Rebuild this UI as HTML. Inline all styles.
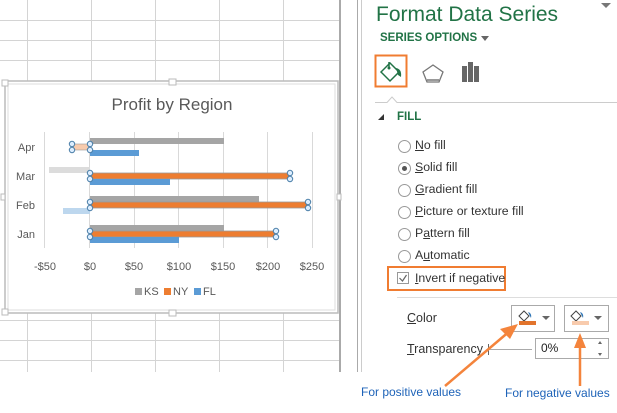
<!DOCTYPE html>
<html><head><meta charset="utf-8"><style>
body{margin:0;width:617px;height:413px;background:#fff;overflow:hidden;position:relative;font-family:"Liberation Sans",sans-serif}
.t{position:absolute;white-space:nowrap}
.r{position:absolute;left:398px;width:11px;height:11px;border:1px solid #999;border-radius:50%;background:#fff}
.l{position:absolute;left:415px;font-size:12.3px;color:#333}
</style></head><body>
<svg width="617" height="413" style="position:absolute;left:0;top:0" font-family="Liberation Sans, sans-serif">
<g stroke="#d4d4d4" stroke-width="1">
<line x1="0" y1="20.5" x2="340" y2="20.5"/><line x1="0" y1="40.5" x2="340" y2="40.5"/><line x1="0" y1="60.5" x2="340" y2="60.5"/>
<line x1="0" y1="320.5" x2="340" y2="320.5"/><line x1="0" y1="340.5" x2="340" y2="340.5"/><line x1="0" y1="360.5" x2="340" y2="360.5"/>
<line x1="27.5" y1="0" x2="27.5" y2="372"/><line x1="91.5" y1="0" x2="91.5" y2="372"/><line x1="155.5" y1="0" x2="155.5" y2="372"/><line x1="219.5" y1="0" x2="219.5" y2="372"/><line x1="283.5" y1="0" x2="283.5" y2="372"/>
</g>
<line x1="340" y1="0" x2="340" y2="372" stroke="#aaa" stroke-width="2"/>
<line x1="357.5" y1="0" x2="357.5" y2="372" stroke="#aaa"/>
<line x1="361.5" y1="0" x2="361.5" y2="372" stroke="#ccc"/>
<rect x="5" y="81" width="333" height="232" fill="#fff" stroke="#bbb" stroke-width="1.5"/>
<rect x="8" y="84" width="327" height="226" fill="#fff" stroke="#ddd"/>
<g fill="#fff" stroke="#bbb"><rect x="2" y="80" width="6" height="6"/><rect x="169" y="79" width="7" height="6"/><rect x="169" y="310" width="7" height="6"/><rect x="2" y="309" width="6" height="6"/><rect x="1" y="194" width="4" height="6"/><rect x="337" y="194" width="4" height="6"/></g>
<text x="172" y="110" font-size="17" fill="#595959" text-anchor="middle">Profit by Region</text>
<g stroke="#d9d9d9"><line x1="44.5" y1="132" x2="44.5" y2="248"/><line x1="89.5" y1="132" x2="89.5" y2="248"/><line x1="134.5" y1="132" x2="134.5" y2="248"/><line x1="178.5" y1="132" x2="178.5" y2="248"/><line x1="223.5" y1="132" x2="223.5" y2="248"/><line x1="267.5" y1="132" x2="267.5" y2="248"/><line x1="312.5" y1="132" x2="312.5" y2="248"/></g>
<g font-size="11" fill="#595959" text-anchor="end"><text x="35" y="151">Apr</text><text x="35" y="180">Mar</text><text x="35" y="209">Feb</text><text x="35" y="238">Jan</text></g>
<g font-size="11" fill="#595959" text-anchor="middle"><text x="45" y="270">-$50</text><text x="90" y="270">$0</text><text x="134" y="270">$50</text><text x="179" y="270">$100</text><text x="223" y="270">$150</text><text x="268" y="270">$200</text><text x="312" y="270">$250</text></g>
<rect x="90" y="138" width="134" height="6" fill="#a5a5a5"/>
<rect x="72" y="144" width="18" height="6" fill="#f8cbad" stroke="#999" stroke-width=".6"/>
<rect x="90" y="150" width="49" height="6" fill="#5b9bd5"/>
<rect x="49" y="167" width="41" height="6" fill="#dcdcdc"/>
<rect x="90" y="173" width="200" height="6" fill="#ed7d31" stroke="#999" stroke-width=".8"/>
<rect x="90" y="179" width="80" height="6" fill="#5b9bd5"/>
<rect x="90" y="196" width="169" height="6" fill="#a5a5a5"/>
<rect x="90" y="202" width="218" height="6" fill="#ed7d31" stroke="#999" stroke-width=".8"/>
<rect x="63" y="208" width="27" height="6" fill="#bdd7ee"/>
<rect x="90" y="225" width="134" height="6" fill="#a5a5a5"/>
<rect x="90" y="231" width="186" height="6" fill="#ed7d31" stroke="#999" stroke-width=".8"/>
<rect x="90" y="237" width="89" height="6" fill="#5b9bd5"/>
<g fill="#ddeeff" stroke="#4a7ea8" stroke-width="1">
<circle cx="72" cy="144" r="2.7"/><circle cx="72" cy="150" r="2.7"/><circle cx="90" cy="144" r="2.7"/><circle cx="90" cy="150" r="2.7"/>
<circle cx="90" cy="173" r="2.7"/><circle cx="90" cy="179" r="2.7"/><circle cx="290" cy="173" r="2.7"/><circle cx="290" cy="179" r="2.7"/>
<circle cx="90" cy="202" r="2.7"/><circle cx="90" cy="208" r="2.7"/><circle cx="308" cy="202" r="2.7"/><circle cx="308" cy="208" r="2.7"/>
<circle cx="90" cy="231" r="2.7"/><circle cx="90" cy="237" r="2.7"/><circle cx="276" cy="231" r="2.7"/><circle cx="276" cy="237" r="2.7"/>
</g>
<g font-size="11" fill="#595959"><rect x="135" y="288" width="7" height="7" fill="#a5a5a5"/><text x="144" y="295">KS</text><rect x="164" y="288" width="7" height="7" fill="#ed7d31"/><text x="173" y="295">NY</text><rect x="194" y="288" width="7" height="7" fill="#5b9bd5"/><text x="203" y="295">FL</text></g>
<polygon points="601,3 611,3 606,8" fill="#777"/>
<polygon points="481,36 489,36 485,41" fill="#666"/>
<rect x="375.5" y="55.5" width="31" height="31" fill="none" stroke="#f07c31" stroke-width="2"/>
<g stroke="#217346" stroke-width="1.5" fill="none"><polygon points="381,72 390,63 399,72 390,81"/><line x1="389" y1="62" x2="389" y2="68"/></g>
<path d="M396,68 q6,1 5,9 l-3,-2 z" fill="#217346"/>
<circle cx="389" cy="68" r="1.5" fill="#217346"/>
<polygon points="433,65 423,72 427,82 439,82 443,72" fill="none" stroke="#777" stroke-width="1.3"/>
<line x1="427" y1="80" x2="439" y2="80" stroke="#777" stroke-width="1.5"/>
<g fill="#666"><rect x="462" y="66" width="5" height="16"/><rect x="468" y="62" width="5" height="20"/><rect x="474" y="66" width="5" height="16"/></g>
<polyline points="375,102.5 387,102.5 392,97 397,102.5 617,102.5" fill="none" stroke="#ccc"/>
<polygon points="384,114 384,120 378,120" fill="#333"/>
<rect x="388" y="267" width="117" height="23" fill="none" stroke="#f07c31" stroke-width="2"/>
<rect x="397.5" y="272.5" width="11" height="11" fill="#fff" stroke="#999"/>
<polyline points="399.5,278 402.5,281 406.5,275" fill="none" stroke="#666" stroke-width="1.2"/>
<line x1="397" y1="297.5" x2="617" y2="297.5" stroke="#ddd"/>
<rect x="511.5" y="305.5" width="43" height="26" fill="#fff" stroke="#aaa"/>
<rect x="564.5" y="305.5" width="44" height="26" fill="#fff" stroke="#aaa"/>
<g fill="none" stroke="#444" stroke-width="1"><polygon points="519,316 524,311 529,316 524,321"/><polygon points="571,316 576,311 581,316 576,321"/></g>
<path d="M528,312 q4,1 3,6 z" fill="#2e75b6"/><path d="M580,312 q4,1 3,6 z" fill="#2e75b6"/>
<rect x="519" y="321" width="17" height="4" fill="#e2742c"/>
<rect x="572" y="321" width="17" height="4" fill="#f8cbad"/>
<polygon points="542,316 550,316 546,320" fill="#666"/><polygon points="594,316 602,316 598,320" fill="#666"/>
<line x1="488.5" y1="344" x2="488.5" y2="355" stroke="#666"/>
<line x1="488" y1="349.5" x2="532" y2="349.5" stroke="#aaa"/>
<rect x="535.5" y="338.5" width="73" height="20" fill="#fff" stroke="#aaa"/>
<polygon points="598,344 602,344 600,341" fill="#666"/><polygon points="598,353 602,353 600,356" fill="#666"/>
<g stroke="#f4843c" stroke-width="2.5" fill="#f4843c">
<line x1="445" y1="386" x2="511" y2="330"/>
<polygon points="518,324 500,329 510,339" stroke="none"/>
<line x1="580" y1="386" x2="580" y2="342"/>
<polygon points="580,333 574,348 586,348" stroke="none"/>
</g>
</svg>
<div class="t" style="left:376px;top:3px;font-size:21px;color:#217346">Format Data Series</div>
<div class="t" style="left:380px;top:32px;font-size:11.5px;font-weight:bold;color:#217346">SERIES OPTIONS</div>
<div class="t" style="left:397px;top:111px;font-size:11.5px;font-weight:bold;color:#217346">FILL</div>
<div class="r" style="top:140px"></div><div class="l" style="top:138px"><u>N</u>o fill</div>
<div class="r" style="top:162px"></div><div style="position:absolute;left:402px;top:166px;width:5px;height:5px;border-radius:50%;background:#555"></div><div class="l" style="top:160px"><u>S</u>olid fill</div>
<div class="r" style="top:184px"></div><div class="l" style="top:182px"><u>G</u>radient fill</div>
<div class="r" style="top:206px"></div><div class="l" style="top:204px"><u>P</u>icture or texture fill</div>
<div class="r" style="top:228px"></div><div class="l" style="top:226px">P<u>a</u>ttern fill</div>
<div class="r" style="top:250px"></div><div class="l" style="top:248px">A<u>u</u>tomatic</div>
<div class="l" style="top:271px"><u>I</u>nvert if negative</div>
<div class="t" style="left:407px;top:311px;font-size:12.5px;color:#333"><u>C</u>olor</div>
<div class="t" style="left:407px;top:342px;font-size:12.5px;color:#333"><u>T</u>ransparency</div>
<div class="t" style="left:541px;top:341px;font-size:12px;color:#222">0%</div>
<div class="t" style="left:361px;top:385px;font-size:12px;color:#1e63b8">For positive values</div>
<div class="t" style="left:505px;top:386px;font-size:12px;color:#1e63b8">For negative values</div>
</body></html>
